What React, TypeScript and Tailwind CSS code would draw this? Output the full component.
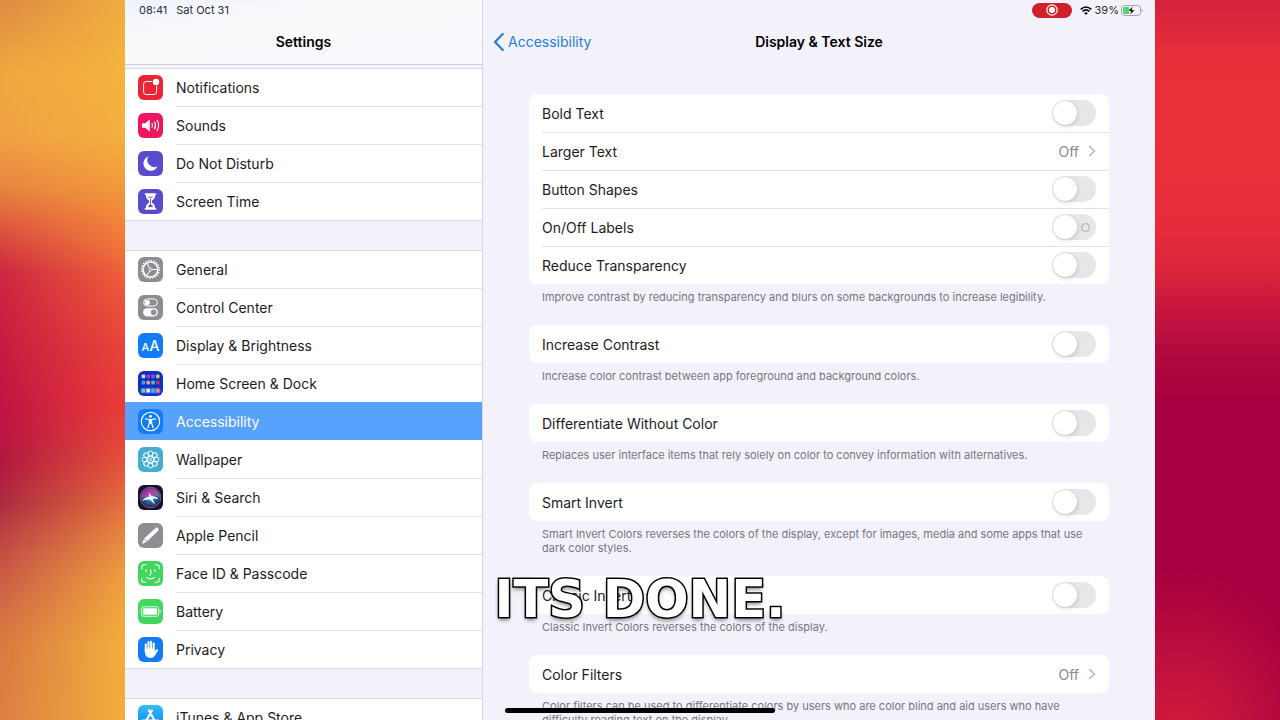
import React, { useState } from 'react';
import { clsx } from 'clsx';

interface MenuItem {
  label: string;
  tile: string;
  icon: React.ReactNode;
}

interface Option {
  label: string;
  kind: 'toggle' | 'link';
}

interface OptionGroup {
  options: Option[];
  note: string;
}

const NotificationsIcon = (
  <>
    <rect x="5.600" y="6.500" width="13" height="13" rx="2.600" fill="none" stroke="#fff" strokeWidth="1" />
    <circle cx="18" cy="7" r="4" fill="#ec2433" />
    <circle cx="18" cy="7" r="3.200" fill="#fff" />
  </>
);

const SoundsIcon = (
  <>
    <path d="M4 10.2h3.2l4-3.4q.6-.4.6.3v10.8q0 .7-.6.3l-4-3.4H4z" fill="#fff" />
    <g fill="none" stroke="#fff" strokeLinecap="round" strokeWidth="1.1">
      <path d="M14 10.6q1 1.9 0 3.8" />
      <path d="M16.6 9q1.9 3.5 0 7" />
      <path d="M19.2 7.3q2.8 5.2 0 10.4" />
    </g>
  </>
);

const MoonIcon = <path d="M10.3 5.6a7.3 7.3 0 1 0 9.2 9.7 7 7 0 0 1-9.200-9.700z" fill="#fff" />;

const HourglassIcon = (
  <>
    <path
      d="M7.5 4.2h10q.8 0 .8.9t-.8.9h-.3q0 3.5-3.2 5.600v1.800q3.200 2.100 3.200 5.600h.3q.8 0 .8.9t-.8.9h-10q-.8 0-.8-.9t.8-.9h.3q0-3.500 3.200-5.600v-1.800q-3.200-2.100-3.200-5.600h-.3q-.8 0-.8-.9t.8-.9z"
      fill="#fff"
    />
    <path d="M10.300 8.200h4.400M12.500 9.500v6M10.500 17.600q.5-1.500 2-1.800 1.500.3 2 1.800z" stroke="#594bcd" strokeWidth="0.900" fill="#594bcd" />
  </>
);

const GearIcon = (
  <g fill="none" stroke="#fff">
    <circle cx="12.5" cy="12.5" r="8.8" strokeWidth="1.600" strokeDasharray="1.380 1.380" />
    <circle cx="12.5" cy="12.5" r="7.400" strokeWidth="1.500" />
    <circle cx="12.5" cy="12.5" r="1.500" strokeWidth="0.900" />
    <path d="M14.2 12.500h5.300M11.600 11l-2.700-4.700M11.600 14l-2.700 4.700" strokeWidth="1" />
  </g>
);

const ControlCenterIcon = (
  <>
    <rect x="5.700" y="3.900" width="13.600" height="7.200" rx="3.600" fill="none" stroke="#fff" strokeWidth="1" />
    <circle cx="9.300" cy="7.500" r="2.600" fill="#fff" />
    <rect x="5.200" y="13.200" width="14.600" height="8.200" rx="4.100" fill="#fff" />
    <circle cx="15.700" cy="17.300" r="2.800" fill="#8e8d93" />
  </>
);

const DisplayIcon = (
  <g fill="#fff" fontFamily="Inter, sans-serif" fontWeight="500">
    <text x="3.500" y="18" fontSize="11">A</text>
    <text x="11.500" y="18" fontSize="14">A</text>
  </g>
);

const dots = [
  ['#d8d7f5', '#a33fc4', '#8b4be0', '#b5d36b'],
  ['#38a5ee', '#f1a17a', '#47c6a8', '#c52a67'],
  ['#5fd88a', '#e6f0ff', '#42b5f7', '#f08a62'],
];

const HomeScreenIcon = (
  <>
    <rect x="2.500" y="16.800" width="20" height="5.600" rx="1.500" fill="#4a63dc" />
    {dots.map((line, y) =>
      line.map((color, x) => (
        <rect key={`${x}-${y}`} x={3.6 + x * 4.8} y={[3.6, 9.8, 17.8][y]} width="3.600" height="3.600" rx="1" fill={color} />
      ))
    )}
  </>
);

const AccessibilityIcon = (
  <>
    <circle cx="12.500" cy="12.500" r="9.200" fill="none" stroke="#fff" strokeWidth="1.100" />
    <circle cx="12.500" cy="7.400" r="1.400" fill="#fff" />
    <path
      d="M7.500 9.800l3.600.7h2.800l3.600-.7M12.500 10.500v4M11.400 10.500v3.500l-1.500 4.800M13.600 10.500v3.500l1.500 4.800"
      fill="none"
      stroke="#fff"
      strokeWidth="1.200"
      strokeLinecap="round"
      strokeLinejoin="round"
    />
  </>
);

const WallpaperIcon = (
  <g fill="none" stroke="#fff" strokeWidth="1">
    {[0, 45, 90, 135, 180, 225, 270, 315].map((angle) => (
      <circle key={angle} cx="12.500" cy="6.500" r="2.400" transform={`rotate(${angle} 12.5 12.5)`} />
    ))}
    <circle cx="12.500" cy="12.500" r="3.200" />
    <circle cx="12.500" cy="12.500" r="1.100" />
  </g>
);

const SiriIcon = (
  <>
    <defs>
      <radialGradient id="siri" cx="50%" cy="50%" r="55%">
        <stop offset="0" stopColor="#7fe8f0" />
        <stop offset="0.350" stopColor="#2f6fb0" />
        <stop offset="1" stopColor="#1a1540" />
      </radialGradient>
      <linearGradient id="siriTop" x1="0" y1="0" x2="1" y2="1">
        <stop offset="0" stopColor="#5b2fb0" />
        <stop offset="0.500" stopColor="#d0359c" />
        <stop offset="1" stopColor="#1fb6b0" />
      </linearGradient>
    </defs>
    <circle cx="12.500" cy="12.500" r="10.300" fill="url(#siri)" stroke="#8c88b0" strokeWidth="0.700" />
    <path d="M3 14C3 6 8 2.800 12.500 2.800S22 7 22 13c-4-3-6-3-9.500-1C9 10.500 6 12 3 14z" fill="url(#siriTop)" opacity="0.850" />
    <path d="M3.800 16q4-4.500 7.700-4.200L10.600 7l3 4.300q4.600-.3 7.400 3.200-4-1.700-6.400-.8l2.600 6.300-4.900-5.300q-4-1-8.500 1.300z" fill="#e8fdff" />
  </>
);

const PencilIcon = (
  <>
    <path d="M17.600 5.200q1.200-1 2.300.1t.1 2.300L9.300 18.100l-2.700-2.700z" fill="#fff" stroke="#fff" strokeWidth="0.600" />
    <path d="M6 16l2.700 2.700-4.200 2q-.6.100-.5-.5z" fill="#fff" />
  </>
);

const FaceIdIcon = (
  <g fill="none" stroke="#fff" strokeWidth="1.100" strokeLinecap="round" strokeLinejoin="round">
    <path d="M3.800 7.800V6q0-2.200 2.200-2.200h1.800M17.200 3.800H19q2.200 0 2.200 2.200v1.800M21.200 17.200V19q0 2.200-2.200 2.200h-1.800M7.800 21.200H6q-2.200 0-2.200-2.200v-1.800" />
    <path d="M8 8.800v1.800M17 8.800v1.800M12.800 8.800v4.400q0 .9-1.100.9M8.700 16.300q3.800 3.300 7.600 0" />
  </g>
);

const BatteryTileIcon = (
  <>
    <rect x="3.300" y="7.700" width="17.400" height="9.600" rx="2.300" fill="none" stroke="#fff" strokeWidth="0.800" />
    <rect x="4.900" y="9.200" width="14.200" height="6.600" rx="1" fill="#fff" />
    <path d="M21.700 11v3q1-.4 1-1.500t-1-1.500z" fill="#fff" />
  </>
);

const HandIcon = (
  <>
    <g stroke="#fff" strokeWidth="2" strokeLinecap="round">
      <path d="M7.800 7.300v7M10.500 5v8M13.100 4.800v8M15.700 6.500v7" />
    </g>
    <path d="M6.800 11.500h9.900v3l1.700-2q.9-.8 1.500-.3.500.5 0 1.500l-3 5q-1.500 2.400-4.500 2.400-5.600 0-5.600-6.500z" fill="#fff" />
  </>
);

const AppStoreIcon = (
  <g fill="none" stroke="#fff" strokeWidth="2.200" strokeLinecap="round">
    <path d="M11 5.500l7.400 13.500M14 5.500L8.800 14.500M4.500 15.500h9.500M18 15.500h2.500M7.300 17.800l-.7 1.200" />
  </g>
);

const menu: MenuItem[][] = [
  [
    { label: 'Notifications', tile: 'bg-[#ec2433]', icon: NotificationsIcon },
    { label: 'Sounds', tile: 'bg-[#ef1560]', icon: SoundsIcon },
    { label: 'Do Not Disturb', tile: 'bg-[#594bcd]', icon: MoonIcon },
    { label: 'Screen Time', tile: 'bg-[#594bcd]', icon: HourglassIcon },
  ],
  [
    { label: 'General', tile: 'bg-[#8e8d93]', icon: GearIcon },
    { label: 'Control Center', tile: 'bg-[#8e8d93]', icon: ControlCenterIcon },
    { label: 'Display & Brightness', tile: 'bg-[#127bf6]', icon: DisplayIcon },
    { label: 'Home Screen & Dock', tile: 'bg-[#1230c0]', icon: HomeScreenIcon },
    { label: 'Accessibility', tile: 'bg-[#127bf6]', icon: AccessibilityIcon },
    { label: 'Wallpaper', tile: 'bg-[#43aed2]', icon: WallpaperIcon },
    { label: 'Siri & Search', tile: 'bg-[#17132e]', icon: SiriIcon },
    { label: 'Apple Pencil', tile: 'bg-[#8e8d93]', icon: PencilIcon },
    { label: 'Face ID & Passcode', tile: 'bg-[#42d65f]', icon: FaceIdIcon },
    { label: 'Battery', tile: 'bg-[#42d65f]', icon: BatteryTileIcon },
    { label: 'Privacy', tile: 'bg-[#127bf6]', icon: HandIcon },
  ],
  [{ label: 'iTunes & App Store', tile: 'bg-linear-to-b from-[#2fc1f4] to-[#1b78ee]', icon: AppStoreIcon }],
];

const groups: OptionGroup[] = [
  {
    options: [
      { label: 'Bold Text', kind: 'toggle' },
      { label: 'Larger Text', kind: 'link' },
      { label: 'Button Shapes', kind: 'toggle' },
      { label: 'On/Off Labels', kind: 'toggle' },
      { label: 'Reduce Transparency', kind: 'toggle' },
    ],
    note: 'Improve contrast by reducing transparency and blurs on some backgrounds to increase legibility.',
  },
  {
    options: [{ label: 'Increase Contrast', kind: 'toggle' }],
    note: 'Increase color contrast between app foreground and background colors.',
  },
  {
    options: [{ label: 'Differentiate Without Color', kind: 'toggle' }],
    note: 'Replaces user interface items that rely solely on color to convey information with alternatives.',
  },
  {
    options: [{ label: 'Smart Invert', kind: 'toggle' }],
    note: 'Smart Invert Colors reverses the colors of the display, except for images, media and some apps that use dark color styles.',
  },
  {
    options: [{ label: 'Classic Invert', kind: 'toggle' }],
    note: 'Classic Invert Colors reverses the colors of the display.',
  },
  {
    options: [{ label: 'Color Filters', kind: 'link' }],
    note: 'Color filters can be used to differentiate colors by users who are color blind and aid users who have difficulty reading text on the display.',
  },
];

function Sidebar() {
  const [active, setActive] = useState('Accessibility');

  return (
    <aside className="flex w-[358px] shrink-0 flex-col border-r border-[#d9d8e0] bg-[#f3f2fa]">
      <header className="border-b border-[#cfced8] bg-linear-to-br from-[#eef3ff] via-[#faf9fc] via-30% to-[#faf9fd]">
        <div className="flex h-5 items-center gap-[9px] pl-[14px] text-[11px] text-[#2c2c30]">
          <span>08:41</span>
          <span>Sat Oct 31</span>
        </div>
        <h1 className="flex h-11 items-center justify-center pb-px text-[14px] font-semibold text-black">Settings</h1>
      </header>
      <nav className="flex flex-col gap-[29px] pt-[3px]">
        {menu.map((section) => (
          <ul key={section[0].label} className="border-b border-[#dbdae2] bg-white">
            {section.map((item, i) => {
              const selected = item.label === active;
              const afterSelected = i > 0 && section[i - 1].label === active;
              return (
                <li key={item.label}>
                  <a
                    href="#"
                    onClick={() => setActive(item.label)}
                    className={clsx(
                      'flex h-[38px] items-center gap-[13px] pl-[13px]',
                      i === 0 && 'border-t border-[#dbdae2]',
                      selected ? 'bg-[#57a2fc] text-white' : 'text-[#1c1c1e]'
                    )}
                  >
                    <svg viewBox="0 0 25 25" className={clsx('size-[25px] shrink-0 rounded-md', item.tile)} aria-hidden="true">
                      {item.icon}
                    </svg>
                    <span
                      className={clsx(
                        'flex flex-1 items-center self-stretch pb-px',
                        i > 0 && 'border-t',
                        selected || afterSelected ? 'border-transparent' : 'border-[#e3e2e8]'
                      )}
                    >
                      {item.label}
                    </span>
                  </a>
                </li>
              );
            })}
          </ul>
        ))}
      </nav>
    </aside>
  );
}

function StatusIcons() {
  return (
    <div className="flex h-5 shrink-0 items-center justify-end pr-3 text-[11px] text-[#2c2c30]">
      <span className="mr-2 flex h-[15px] w-10 items-center justify-center rounded-full bg-[#cf202c]">
        <svg viewBox="0 0 12 12" className="size-3" aria-hidden="true">
          <circle cx="6" cy="6" r="5.200" fill="none" stroke="#fff" strokeWidth="1.200" />
          <circle cx="6" cy="6" r="3" fill="#fff" />
        </svg>
      </span>
      <svg viewBox="0 0 12 9" className="mr-[3px] h-[9px] w-3" aria-hidden="true">
        <g fill="none" stroke="#000" strokeWidth="1.600">
          <path d="M.7 3.300q5.300-4.600 10.600 0" />
          <path d="M2.600 5.400q3.400-2.900 6.800 0" />
        </g>
        <path d="M4.100 6.900q1.900-1.400 3.800 0L6 8.900z" fill="#000" />
      </svg>
      <span>39%</span>
      <svg viewBox="0 0 22 11" className="ml-[2px] h-[11px] w-[22px]" aria-hidden="true">
        <rect x="0.500" y="0.500" width="19" height="10" rx="3" fill="none" stroke="#9c9ba3" strokeWidth="0.900" />
        <path d="M3.500 2H8v7H3.500Q2 9 2 7.500v-4Q2 2 3.500 2z" fill="#4cd964" />
        <path d="M11.800 1.300L7 6h3l-1 3.700L13.800 5h-3z" fill="#000" stroke="#f3f2fb" strokeWidth="0.400" />
        <path d="M20.700 3.800v3.400q1-.5 1-1.700t-1-1.700z" fill="#9c9ba3" />
      </svg>
    </div>
  );
}

function OptionRow({ option, first }: { option: Option; first: boolean }) {
  const id = option.label.toLowerCase().replace(/[^a-z]+/g, '-');
  const line = clsx(
    'flex h-[38px] flex-1 items-center justify-between pr-[13px]',
    !first && 'border-t border-[#e3e2e8] pb-px'
  );

  if (option.kind === 'link') {
    return (
      <a href="#" className="flex pl-[13px]">
        <span className={line}>
          {option.label}
          <span className="flex items-center gap-[9px] text-[#8a898f]">
            Off
            <svg viewBox="0 0 8 12" className="h-3 w-2" aria-hidden="true">
              <path d="M1 1l5.500 5L1 11" fill="none" stroke="#b9b8be" strokeWidth="1.500" />
            </svg>
          </span>
        </span>
      </a>
    );
  }

  return (
    <div className="flex pl-[13px]">
      <div className={line}>
        <label htmlFor={id}>{option.label}</label>
        <input
          id={id}
          type="checkbox"
          role="switch"
          className={clsx(
            'relative flex h-[26px] w-11 appearance-none items-center justify-between rounded-full bg-[#e7e6e9] px-px checked:flex-row-reverse checked:bg-[#42d65f]',
            "before:size-6 before:rounded-full before:bg-white before:shadow-[1px_2px_4px_rgba(0,0,0,0.12),0_0_1px_rgba(0,0,0,0.15)] before:content-['']",
            option.label === 'On/Off Labels' &&
              "after:mr-[5px] after:size-[9px] after:rounded-full after:border after:border-[#a5a4a9] after:content-['']"
          )}
        />
      </div>
    </div>
  );
}

function DisplayAndTextSize() {
  return (
    <main className="flex min-w-0 flex-1 flex-col bg-[#f3f2fb]">
      <StatusIcons />
      <header className="grid h-11 shrink-0 grid-cols-[1fr_auto_1fr] items-center px-[10px] pb-px">
        <a href="#" className="flex items-center gap-1 text-[#1f7ee0]">
          <svg viewBox="0 0 11 18" className="h-[18px] w-[11px]" aria-hidden="true">
            <path d="M9.800 1L2 9l7.800 8" fill="none" stroke="#1f7ee0" strokeWidth="2.200" strokeLinecap="round" strokeLinejoin="round" />
          </svg>
          Accessibility
        </a>
        <h2 className="text-[14px] font-semibold text-black">Display &amp; Text Size</h2>
      </header>
      <div className="flex flex-col gap-[21px] px-[46px] pt-[30px]">
        {groups.map((group) => (
          <section key={group.options[0].label}>
            <div className="rounded-lg bg-white text-[#1c1c1e]">
              {group.options.map((option, i) => (
                <OptionRow key={option.label} option={option} first={i === 0} />
              ))}
            </div>
            <p className="mt-[6px] px-[13px] text-[11px] leading-[14px] text-[#77767d]">{group.note}</p>
          </section>
        ))}
      </div>
    </main>
  );
}

export default function App() {
  return (
    <div className="flex h-screen overflow-hidden font-['Inter',sans-serif] text-[14px]">
      <div className="relative w-[125px] shrink-0 bg-[linear-gradient(#f0ac40_0%,#f6b43f_10%,#f4b040_19%,#f39a3a_26%,#f27c3a_33%,#ee5c3a_39%,#e9453a_48%,#e93c39_56%,#e5473b_61%,#e4643c_68%,#e88540_74%,#ee9f3f_80%,#f3ae3f_89%,#f3ae3e_100%)]">
        <div className="absolute inset-0 bg-[linear-gradient(#de8a42_0%,#efa63f_10%,#f0a043_19%,#e88441_26%,#db5240_32%,#cc2640_38%,#c81a40_48%,#c01343_57%,#b0173f_64%,#ac2c3f_70%,#c24e45_77%,#cf6645_83%,#d8793f_89%,#dc8043_100%)] [mask-image:linear-gradient(to_right,black,transparent)]" />
      </div>
      <div className="relative flex min-w-0 flex-1">
        <Sidebar />
        <DisplayAndTextSize />
        <div className="absolute bottom-[7px] left-1/2 h-[5px] w-[270px] -translate-x-1/2 rounded-full bg-black" />
        <p className="absolute bottom-[90px] left-1/2 -translate-x-1/2 font-['DejaVu_Sans',sans-serif] text-[51px] leading-[60px] font-bold whitespace-nowrap text-white [paint-order:stroke_fill] [-webkit-text-stroke:3px_black] [text-shadow:0_3px_4px_rgba(0,0,0,0.5)]">
          ITS DONE.
        </p>
      </div>
      <div className="w-[125px] shrink-0 bg-[radial-gradient(150px_190px_at_20%_105%,#d8203b_0%,#d8203b00_100%),linear-gradient(#d4223d_0%,#e82f39_8%,#ea3139_19%,#e62c3c_32%,#da243c_38%,#c5153f_43%,#b20a3f_49%,#a60040_56%,#a60040_100%)]" />
    </div>
  );
}
